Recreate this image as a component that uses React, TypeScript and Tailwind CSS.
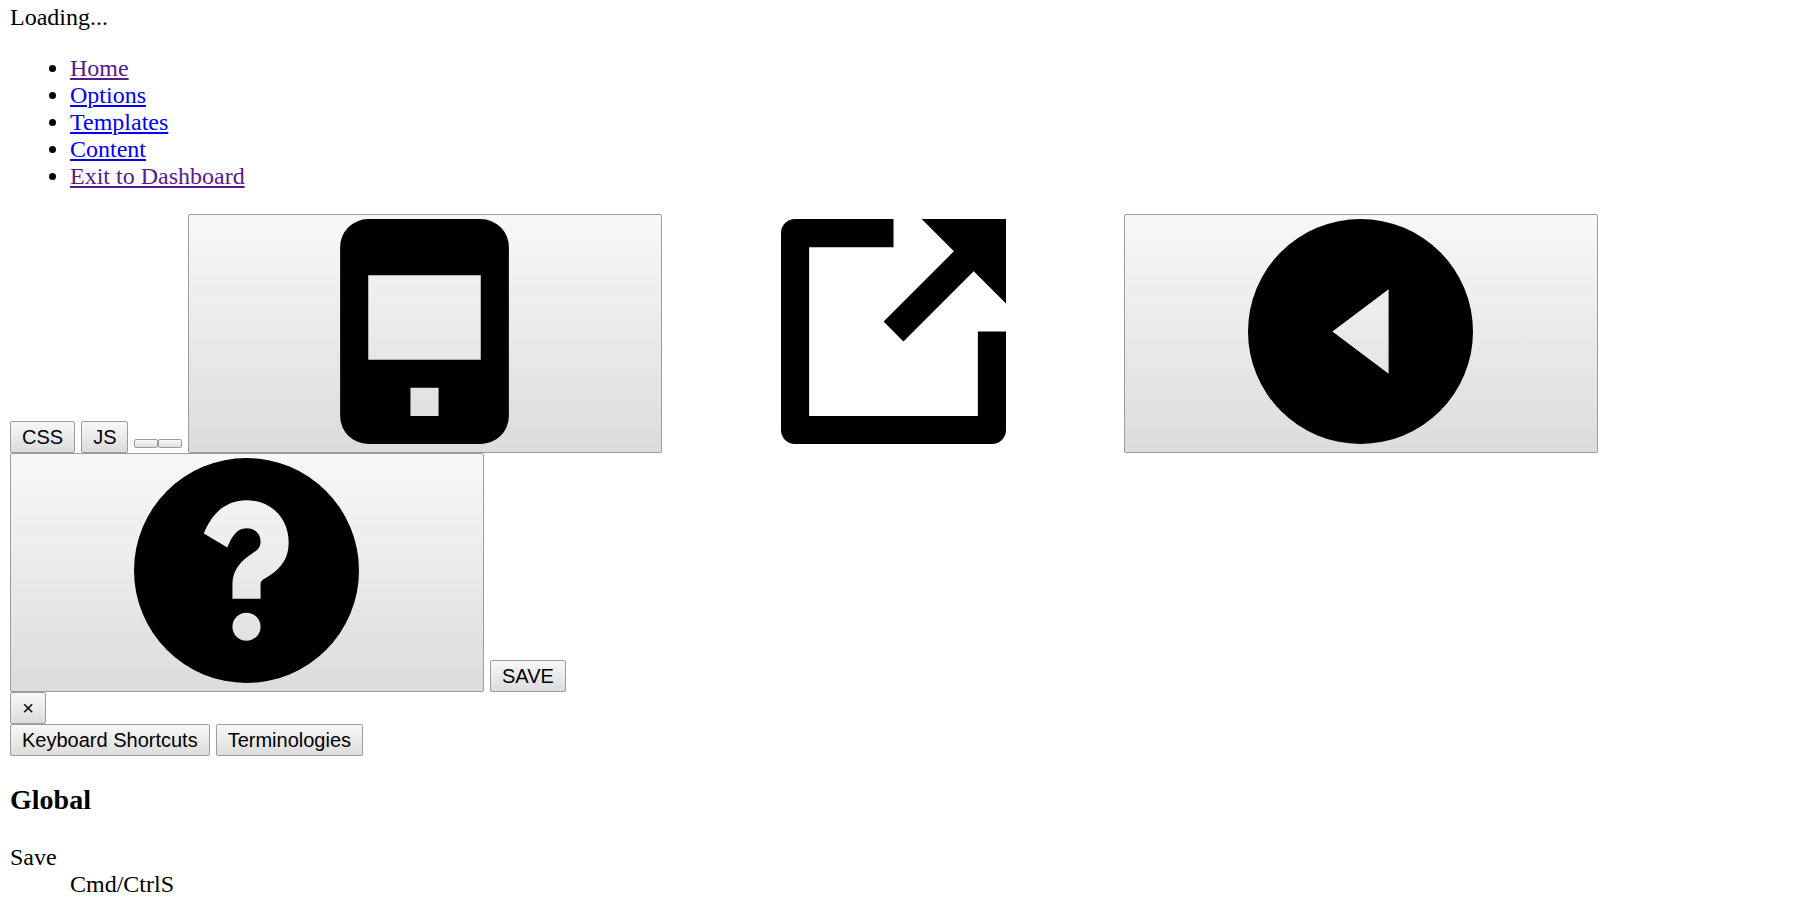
import React from "react";

const btn =
  "rounded-[2px] border border-[#9c9c9c] bg-linear-to-b from-[#f8f8f8] to-[#dcdcdc] font-['Liberation_Sans',sans-serif] text-[20px] leading-[24px] text-black";
const textBtn = `${btn} h-[32px] px-[11px]`;
const iconBtn = `${btn} w-[474px] h-[239px] flex justify-center items-start pt-1 pr-px shrink-0`;

const Icon = ({ d }: { d: string }) => (
  <svg viewBox="0 0 24 24" className="w-[225px] h-[225px] block" fillRule="evenodd">
    <path d={d} fill="#000" />
  </svg>
);

const phone =
  "M6 0H18A3 3 0 0 1 21 3V21A3 3 0 0 1 18 24H6A3 3 0 0 1 3 21V3A3 3 0 0 1 6 0ZM6 6V15H18V6ZM10.5 18V21H13.5V18Z";
const external =
  "M1.5 0H12V3H3V21H21V12H24V22.5A1.5 1.5 0 0 1 22.5 24H1.5A1.5 1.5 0 0 1 0 22.5V1.5A1.5 1.5 0 0 1 1.5 0ZM15 0H24V9L20.56 5.56L13.06 13.06L10.94 10.94L18.44 3.44Z";
const back = "M12 0A12 12 0 1 1 12 24A12 12 0 1 1 12 0ZM15 7.5V16.5L9 12Z";
const help =
  "M12 0A12 12 0 1 1 12 24A12 12 0 1 1 12 0ZM12 4.5C9.8 4.5 8.3 5.9 7.45 8.05L9.95 9.55C10.4 8.5 10.9 7.5 12 7.5C12.9 7.5 13.5 8.1 13.5 8.9C13.5 9.7 13 9.9 12.3 10.4C11.2 11.2 10.5 12.1 10.5 13.5V15H13.5V13.5C13.5 13 13.9 12.9 14.5 12.5C15.7 11.7 16.5 10.7 16.5 9C16.5 6.4 14.6 4.5 12 4.5ZM12 16.5A1.5 1.5 0 1 1 12 19.5A1.5 1.5 0 1 1 12 16.5Z";

const links = [
  { label: "Home", color: "text-[#551a8b]" },
  { label: "Options", color: "text-[#0000ee]" },
  { label: "Templates", color: "text-[#0000ee]" },
  { label: "Content", color: "text-[#0000ee]" },
  { label: "Exit to Dashboard", color: "text-[#551a8b]" },
];

export default function App() {
  return (
    <div className="h-[899px] overflow-hidden bg-white px-[10px] pt-[4px] font-['Liberation_Serif',serif] text-[24px] leading-[27px] text-black">
      <div>Loading...</div>

      <ul className="mt-[24px] mb-[24px] list-disc pl-[60px]">
        {links.map(({ label, color }) => (
          <li key={label}>
            <a href="#" className={`underline ${color}`}>
              {label}
            </a>
          </li>
        ))}
      </ul>

      <div className="flex items-end">
        <button className={textBtn}>CSS</button>
        <button className={`${textBtn} ml-[6px]`}>JS</button>
        <div className="ml-[6px] mr-[6px] mb-[5px] flex">
          <button className={`${btn} w-[24px] h-[9px]`}></button>
          <button className={`${btn} w-[24px] h-[9px]`}></button>
        </div>
        <button className={iconBtn}>
          <Icon d={phone} />
        </button>
        <button className="w-[462px] h-[239px] flex justify-center items-start pt-[5px] shrink-0">
          <Icon d={external} />
        </button>
        <button className={iconBtn}>
          <Icon d={back} />
        </button>
      </div>

      <div className="flex items-end">
        <button className={iconBtn}>
          <Icon d={help} />
        </button>
        <button className={`${textBtn} ml-[6px]`}>SAVE</button>
      </div>

      <div>
        <button className={`${btn} block h-[32px] w-[36px] text-[16px]`}>×</button>
      </div>

      <div className="flex gap-[6px]">
        <button className={textBtn}>Keyboard Shortcuts</button>
        <button className={textBtn}>Terminologies</button>
      </div>

      <h3 className="mt-[28px] mb-[28px] text-[28px] leading-[32px] font-bold">Global</h3>

      <dl>
        <dt>Save</dt>
        <dd className="ml-[60px]">Cmd/CtrlS</dd>
      </dl>
    </div>
  );
}
